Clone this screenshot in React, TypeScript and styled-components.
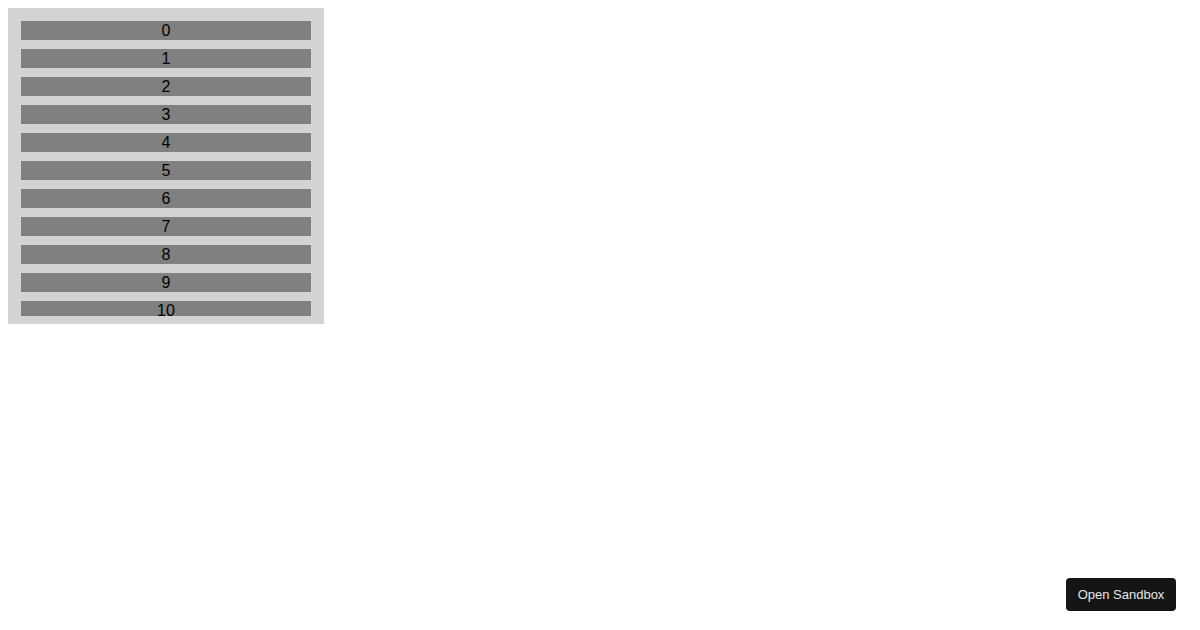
import React from "react";
import styled, { createGlobalStyle } from "styled-components";

const GlobalStyle = createGlobalStyle`
  body {
    margin: 8px;
    background: #ffffff;
    font-family: "Liberation Sans", Arial, sans-serif;
    font-size: 16px;
    color: #000000;
  }
`;

const Frame = styled.div`
  width: 316px;
  height: 316px;
  box-sizing: border-box;
  padding: 8px;
  background-color: lightgray;
`;

const Scroller = styled.div`
  height: 300px;
  box-sizing: border-box;
  overflow: hidden;
  padding: 5px;
  display: flex;
  flex-direction: column;
  gap: 9px;
`;

const Row = styled.div`
  flex: 0 0 19px;
  height: 19px;
  line-height: 19px;
  background-color: grey;
  text-align: center;
`;

const SandboxButton = styled.a`
  position: fixed;
  right: 24px;
  bottom: 19px;
  width: 110px;
  height: 33px;
  display: flex;
  align-items: center;
  justify-content: center;
  box-sizing: border-box;
  border-radius: 4px;
  background: #151515;
  color: #e6e6e6;
  font-family: "Liberation Sans", Arial, sans-serif;
  font-size: 13px;
  text-decoration: none;
`;

const items = Array.from({ length: 11 }, (_, i) => i);

const App = () => {
  return (
    <>
      <GlobalStyle />
      <Frame>
        <Scroller>
          {items.map((n) => (
            <Row key={n}>{n}</Row>
          ))}
        </Scroller>
      </Frame>
      <SandboxButton href="#">Open Sandbox</SandboxButton>
    </>
  );
};

export default App;
